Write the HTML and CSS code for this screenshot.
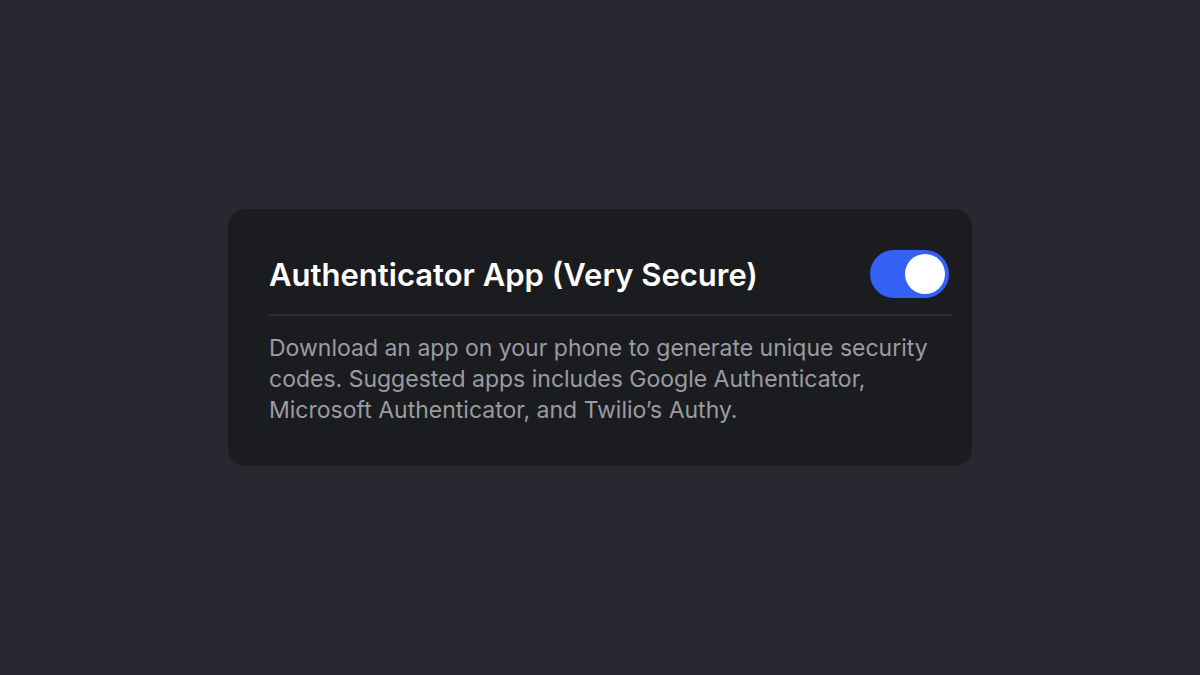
FILE: index.html
```html
<!DOCTYPE html>
<html lang="en">
<head>
    <meta charset="UTF-8">
    <title>Authenticator App</title>
    <link rel="stylesheet" href="styles.css">
</head>
<body>
<div class="card">
    <div class="card-head">
        <h2 class="card-title">Authenticator App (Very Secure)</h2>
        <span class="switch on"><span class="knob"></span></span>
    </div>
    <p class="card-text">Download an app on your phone to generate unique security codes. Suggested apps includes Google Authenticator, Microsoft Authenticator, and Twilio’s Authy.</p>
</div>
</body>
</html>
```

FILE: styles.css
```css
html,body,h2,p{margin:0;padding:0;}
body{background:#282831;height:100vh;display:flex;align-items:center;justify-content:center;font-family:Inter,sans-serif;}
.card{width:744px;box-sizing:border-box;background:#1b1c20;border-radius:18px;padding:41px 19px 40px 41px;}
.card-head{display:flex;align-items:center;justify-content:space-between;height:48px;padding-right:4px;padding-bottom:16px;border-bottom:2px solid #2b2c31;}
.card-title{color:#fff;font-size:31px;font-weight:600;line-height:38px;padding-top:2px;}
.switch{width:79px;height:48px;border-radius:24px;background:#3461f5;display:flex;align-items:center;justify-content:flex-end;padding:0 4px;box-sizing:border-box;}
.knob{width:40px;height:40px;border-radius:50%;background:#fff;}
.card-text{color:#9b9ba1;font-size:23px;line-height:31px;margin-top:17px;padding-right:10px;}
```
